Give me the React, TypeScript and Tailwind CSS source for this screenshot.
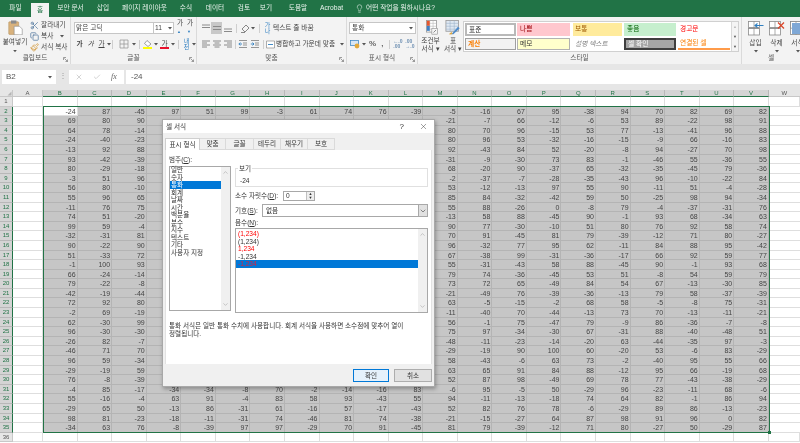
import React from "react";
import { Scissors, Copy, Paintbrush, Lightbulb, X, Check, ChevronUp, ChevronDown } from "lucide-react";

const RAW = [
  "-24 87 -45 97 51 99 -3 61 74 76 -39 -5 -16 67 95 -38 94 70 82 69 82",
  "69 80 90|-21 -7 66 -12 -6 53 89 -22 98 91",
  "64 78 -14|80 70 96 -15 53 77 -13 -41 96 88",
  "-24 -40 -23|80 96 53 -32 -16 -15 -9 66 -16 83",
  "-13 92 88|92 -43 84 52 -20 -8 94 -27 70 98",
  "93 -42 -39|-31 -9 -30 73 83 -1 -46 55 -36 55",
  "80 -29 -18|68 -20 90 -37 65 -32 -35 -45 79 -36",
  "-3 51 96|-2 -37 -7 -28 -35 -43 96 -10 -22 84",
  "56 80 -10|53 -12 -13 97 55 90 -11 51 -4 -28",
  "55 96 65|85 84 -32 -42 59 50 -25 98 94 -34",
  "-11 76 75|55 88 -26 0 -8 79 -4 -37 -31 76",
  "74 51 -20|-13 58 88 -45 90 -1 93 68 -34 63",
  "99 59 -4|90 77 -30 -10 51 80 76 92 58 74",
  "-32 -31 81|70 91 -45 81 79 -39 -12 71 80 -27",
  "90 -22 90|96 -32 77 95 62 -11 84 88 95 -42",
  "51 -33 72|67 -38 99 -31 -36 -17 66 92 59 77",
  "-1 100 93|55 -31 -43 58 88 -45 90 -1 93 68",
  "66 -24 -14|79 74 -36 -45 53 51 -8 54 59 79",
  "79 -22 -8|73 72 65 -49 84 54 67 -13 -30 85",
  "-42 -19 -44|-21 -49 76 -39 -36 -13 79 58 -37 -39",
  "72 92 80|63 -5 -15 -2 68 58 -5 -8 75 -31",
  "-2 69 -19|-11 -40 70 -44 -13 73 70 -13 -11 -21",
  "62 -30 99|56 -1 75 -47 79 -9 86 -36 -7 -8",
  "96 -30 -30|75 97 -34 -30 67 -31 88 -40 -48 51",
  "-26 82 -7|-48 -11 -23 -14 -20 63 -44 -35 97 -3",
  "-46 71 70|-29 -19 90 100 60 -20 53 -6 83 -29",
  "96 59 -34|58 -43 -6 63 73 -2 -40 95 55 66",
  "-29 -19 59|63 65 91 84 88 -12 95 66 -19 68",
  "76 -8 -39|52 87 98 -49 69 78 77 -43 -38 -29",
  "-4 85 -17 -34 -34 -8 70 -2 -14 -16 83 -6 95 -5 50 -29 96 -23 -11 68 -6",
  "55 -16 -4 63 91 -4 83 58 93 -43 55 94 -11 -13 -18 74 64 82 -1 86 94",
  "-29 65 50 -13 86 -31 61 -16 57 -17 -43 52 82 76 78 -6 -29 89 86 -13 -23",
  "98 81 -23 -18 -11 -31 74 -46 81 74 -38 -21 -15 -27 64 87 98 91 96 0 82",
  "-34 63 76 -8 -39 97 97 -29 70 91 -45 81 79 -39 -12 71 80 -27 50 -29 87",
];
const ROWS: string[][] = RAW.map((r) => {
  if (!r.includes("|")) return r.split(" ");
  const [a, b] = r.split("|");
  return [...a.split(" "), "", "", "", "", "", "", "", "", ...b.split(" ")];
});
const COLS = "BCDEFGHIJKLMNOPQRSTUV".split("");

function Launcher() {
  return (
    <svg width="5" height="5" viewBox="0 0 5 5" className="absolute right-[2px] bottom-[2px]">
      <path d="M0.5 0.5H3M0.5 0.5V3M1.5 1.5L4.5 4.5M4.5 2.5V4.5H2.5" stroke="#777" strokeWidth="0.7" fill="none" />
    </svg>
  );
}

function Caret({ className = "" }: { className?: string }) {
  return (
    <svg width="4" height="3" viewBox="0 0 4 3" className={className}>
      <path d="M0 0H4L2 2.5Z" fill="#555" />
    </svg>
  );
}

function Group({ w, label, launcher, children }: { w: string; label: string; launcher?: boolean; children: React.ReactNode }) {
  return (
    <div className={`relative flex flex-col shrink-0 ${w} border-r border-[#dadada]`}>
      <div className="h-[36px] flex">{children}</div>
      <div className="h-[11px] text-center text-[#555] text-[6.7px] leading-[9px]">{label}</div>
      {launcher && <Launcher />}
    </div>
  );
}

function Align({ kind }: { kind: "top" | "mid" | "bot" | "left" | "center" | "right" }) {
  const d: Record<string, string> = {
    top: "M1 2H9M1 4.5H9",
    mid: "M1 3.5H9M1 6.5H9",
    bot: "M1 6H9M1 8.5H9",
    left: "M1 2H9M1 4H6M1 6H9M1 8H6",
    center: "M1 2H9M2.5 4H7.5M1 6H9M2.5 8H7.5",
    right: "M1 2H9M4 4H9M1 6H9M4 8H9",
  };
  return (
    <svg width="10" height="10" viewBox="0 0 10 10">
      <path d={d[kind]} stroke="#8a8a8a" strokeWidth="1" fill="none" />
    </svg>
  );
}

function Indent({ flip }: { flip?: boolean }) {
  return (
    <svg width="10" height="10" viewBox="0 0 10 10">
      <path d="M1 1.5H9M5 4H9M5 6H9M1 8.5H9" stroke="#8a8a8a" strokeWidth="0.9" fill="none" />
      <path d={flip ? "M4 5H1M2.3 3.5L0.8 5L2.3 6.5" : "M0.8 5H3.8M2.5 3.5L4 5L2.5 6.5"} stroke="#2f7fc1" strokeWidth="0.9" fill="none" />
    </svg>
  );
}

function CondFormat() {
  return (
    <svg width="18" height="18" viewBox="0 0 18 18">
      <rect x="3.5" y="0.5" width="12" height="14" fill="#fff" stroke="#9a9a9a" />
      <path d="M3.5 4H15.5M3.5 7.5H15.5M3.5 11H15.5M7.5 0.5V14.5M11.5 0.5V14.5" stroke="#b8b8b8" strokeWidth="0.7" />
      <rect x="4" y="1" width="3.5" height="6" fill="#e4572e" />
      <rect x="4" y="7" width="3.5" height="6" fill="#3d7fc4" />
      <rect x="10" y="10" width="7" height="7" fill="#f4f4f4" stroke="#8a8a8a" strokeWidth="0.7" />
      <path d="M12 15L15 12" stroke="#555" strokeWidth="0.8" />
    </svg>
  );
}

function TableFormat() {
  return (
    <svg width="18" height="18" viewBox="0 0 18 18">
      <rect x="0.5" y="0.5" width="15" height="13" fill="#dfe8f2" stroke="#9a9a9a" />
      <path d="M0.5 4H15.5M0.5 7.5H15.5M0.5 11H15.5M5.5 0.5V14M10.5 0.5V14" stroke="#9db3ca" strokeWidth="0.7" />
      <path d="M7 17L15 8L17 10L9.5 17Z" fill="#4d8ac9" />
      <path d="M4 17L7 14.5L8.5 16L7 17.5Z" fill="#d9a441" />
    </svg>
  );
}

function InsertIcon({ kind }: { kind: "insert" | "delete" | "format" }) {
  return (
    <svg width="17" height="16" viewBox="0 0 17 16">
      <rect x="1.5" y={kind === "format" ? 1.5 : 8.5} width="11" height="6.5" fill="#fff" stroke="#8a8a8a" strokeWidth="0.8" />
      <rect x="1.5" y="1.5" width="11" height={kind === "format" ? 13 : 6} fill="#fff" stroke="#8a8a8a" strokeWidth="0.8" />
      <path d="M7 1.5V15M1.5 8.2H12.5" stroke="#8a8a8a" strokeWidth="0.7" />
      {kind === "insert" && <path d="M16.5 5.5H8M10.5 3.5L8 5.5L10.5 7.5" stroke="#2f7fc1" strokeWidth="1.1" fill="none" />}
      {kind === "delete" && <path d="M10 2.5L16 8.5M16 2.5L10 8.5" stroke="#d9472b" strokeWidth="1.3" fill="none" />}
      {kind === "format" && <rect x="3" y="3" width="8" height="11" fill="#7fa8d6" />}
    </svg>
  );
}

function Ribbon() {
  return (
    <div className="flex h-[47px] bg-[#f3f3f3] overflow-hidden">
      <Group w="w-[71px]" label="클립보드" launcher>
        <div className="w-[30px] flex flex-col items-center pt-[3px]">
          <svg width="17" height="17" viewBox="0 0 17 17">
            <rect x="1" y="2" width="11" height="14" rx="0.8" fill="#d9b27c" stroke="#b08d58" strokeWidth="0.6" />
            <rect x="3.5" y="0.5" width="6" height="3.5" fill="#8c8c8c" />
            <path d="M7 7H13L16 10V16.5H7Z" fill="#fff" stroke="#8d8d8d" strokeWidth="0.7" />
          </svg>
          <span className="text-[6.7px] leading-[9px] text-[#444] mt-[2px] whitespace-nowrap">붙여넣기</span>
          <Caret className="mt-[4px]" />
        </div>
        <div className="flex flex-col pt-[3px] gap-[1px] text-[6.7px] leading-[10px] text-[#444]">
          <div className="flex items-center gap-[2px] h-[10px]"><Scissors size={9} color="#53789f" /><span className="whitespace-nowrap">잘라내기</span></div>
          <div className="flex items-center gap-[2px] h-[10px]"><Copy size={9} color="#53789f" /><span>복사</span><Caret className="ml-[5px]" /></div>
          <div className="flex items-center gap-[2px] h-[10px]"><Paintbrush size={9} color="#d39a3c" /><span className="whitespace-nowrap">서식 복사</span></div>
        </div>
      </Group>
      <Group w="w-[126px]" label="글꼴" launcher>
        <div className="flex flex-col pl-[3px]">
          <div className="flex items-center mt-[5px] h-[12px]">
            <div className="w-[80px] h-[12px] bg-white border border-[#c6c6c6] pl-[1px] text-[6.7px] leading-[10px] text-[#444]">맑은 고딕</div>
            <div className="w-[20px] h-[12px] bg-white border border-l-0 border-[#c6c6c6] flex items-center justify-between px-[1px] text-[6.7px] text-[#444]">11<Caret /></div>
            <span className="ml-[3px] text-[6.7px] text-[#444] w-[10px]">가<sup className="text-[#2f7fc1] text-[4px]">▲</sup></span>
            <span className="text-[6.7px] text-[#444] w-[10px]">가<sup className="text-[#2f7fc1] text-[4px]">▼</sup></span>
          </div>
          <div className="flex items-center mt-[4px] h-[12px] text-[6.7px] text-[#444]">
            <span className="w-[11px] text-center font-bold">가</span>
            <span className="w-[11px] text-center italic">가</span>
            <span className="w-[11px] text-center underline">가</span>
            <span className="w-[2px]"><Caret /></span>
            <span className="w-[1px] h-[9px] bg-[#cfcfcf] ml-[3px] mr-[6px]" />
            <svg width="10" height="10" viewBox="0 0 10 10"><path d="M1 1H9V9H1ZM5 1V9M1 5H9" stroke="#9a9a9a" strokeWidth="0.8" fill="none" /></svg>
            <Caret className="ml-[3px]" />
            <span className="w-[1px] h-[9px] bg-[#cfcfcf] ml-[3px] mr-[3px]" />
            <div className="flex flex-col items-center w-[9px]">
              <svg width="9" height="7" viewBox="0 0 9 7"><path d="M4 0.5L8 4L5 6.5L1.5 3.5Z" fill="#fff" stroke="#777" strokeWidth="0.7" /></svg>
              <div className="w-[9px] h-[2px] bg-[#ffff00]" />
            </div>
            <Caret className="ml-[2px]" />
            <div className="flex flex-col items-center w-[9px] ml-[2px] leading-[7px]">
              <span>가</span>
              <div className="w-[9px] h-[2px] bg-[#e8112d]" />
            </div>
            <Caret className="ml-[2px]" />
            <span className="w-[1px] h-[9px] bg-[#cfcfcf] ml-[3px] mr-[3px]" />
            <span className="text-[6px] text-[#2f7fc1] leading-[6px] w-[9px] text-center">내<br />천</span>
            <Caret className="ml-[1px]" />
          </div>
        </div>
      </Group>
      <Group w="w-[150px]" label="맞춤" launcher>
        <div className="flex flex-col pl-[3px]">
          <div className="flex items-center mt-[5px] h-[12px]">
            <span className="w-[11px] flex justify-center"><Align kind="top" /></span>
            <span className="w-[11px] h-[12px] bg-[#c8c8c8] flex justify-center items-center"><Align kind="mid" /></span>
            <span className="w-[11px] flex justify-center"><Align kind="bot" /></span>
            <span className="w-[1px] h-[9px] bg-[#cfcfcf] ml-[3px] mr-[3px]" />
            <svg width="10" height="10" viewBox="0 0 10 10"><path d="M2 6L6 2L9 5L5 9ZM1 9.5H5" stroke="#7b7b7b" strokeWidth="0.9" fill="none" /></svg>
            <Caret className="ml-[1px]" />
            <span className="w-[1px] h-[9px] bg-[#cfcfcf] ml-[4px] mr-[3px]" />
            <span className="text-[6px] text-[#2f7fc1] leading-[6px] w-[9px] text-center">가<br />나</span>
            <span className="ml-[1px] text-[6.7px] text-[#444] whitespace-nowrap">텍스트 줄 바꿈</span>
          </div>
          <div className="flex items-center mt-[4px] h-[12px]">
            <span className="w-[11px] flex justify-center"><Align kind="left" /></span>
            <span className="w-[11px] flex justify-center"><Align kind="center" /></span>
            <span className="w-[11px] flex justify-center"><Align kind="right" /></span>
            <span className="w-[1px] h-[9px] bg-[#cfcfcf] ml-[2px] mr-[2px]" />
            <Indent flip />
            <span className="w-[2px]" />
            <Indent />
            <span className="w-[1px] h-[9px] bg-[#cfcfcf] ml-[3px] mr-[2px]" />
            <svg width="9" height="9" viewBox="0 0 9 9"><path d="M0.5 1H8.5V8H0.5Z" fill="#fff" stroke="#8d8d8d" strokeWidth="0.7" /><path d="M2 4.5H7" stroke="#2f7fc1" strokeWidth="0.9" /></svg>
            <span className="ml-[1px] text-[6.7px] text-[#444] whitespace-nowrap">병합하고 가운데 맞춤</span>
            <Caret className="ml-[5px]" />
          </div>
        </div>
      </Group>
      <Group w="w-[71px]" label="표시 형식" launcher>
        <div className="flex flex-col pl-[2px]">
          <div className="w-[67px] h-[12px] mt-[5px] bg-white border border-[#c6c6c6] flex items-center justify-between px-[2px] text-[6.7px] text-[#444]">통화<Caret /></div>
          <div className="flex items-center mt-[4px] h-[12px] text-[8px] text-[#555]">
            <svg width="11" height="10" viewBox="0 0 11 10" className="ml-[1px]"><rect x="0.5" y="1.5" width="8" height="5" fill="#d8e6f3" stroke="#2f7fc1" strokeWidth="0.7" /><circle cx="7" cy="7" r="2.4" fill="#e2a93b" /></svg>
            <Caret className="ml-[1px]" />
            <span className="ml-[3px] font-bold text-[#666]">%</span>
            <span className="ml-[5px] font-bold text-[#666]">,</span>
            <span className="w-[1px] h-[9px] bg-[#cfcfcf] ml-[6px] mr-[3px]" />
            <span className="text-[5px] leading-[5px] text-[#6d8fb2] font-bold w-[11px]">←.0<br />.00</span>
            <span className="text-[5px] leading-[5px] ml-[1px] text-[#6d8fb2] font-bold w-[11px]">.00<br />→.0</span>
          </div>
        </div>
      </Group>
      <div className="relative flex flex-col shrink-0 w-[324px] border-r border-[#dadada]">
        <div className="h-[36px] flex">
          <div className="w-[25px] flex flex-col items-center pt-[3px] text-[6.7px] leading-[8px] text-[#444]">
            <CondFormat />
            <span className="mt-[2px]">조건부</span>
            <span className="whitespace-nowrap">서식 ▾</span>
          </div>
          <div className="w-[20px] flex flex-col items-center pt-[3px] text-[6.7px] leading-[8px] text-[#444]">
            <TableFormat />
            <span className="mt-[2px]">표</span>
            <span className="whitespace-nowrap">서식 ▾</span>
          </div>
          <div className="mt-[4px] w-[276px] h-[31px] bg-white border border-[#d0d0d0] flex">
            <div className="grid grid-cols-[52px_54px_53px_54px_52px] grid-rows-2 gap-y-[2px] pl-[1px] py-[1px] w-[268px] text-[6.7px] leading-[11px]">
              <div className="mr-[1px] border-2 border-[#b9b9b9] bg-white text-[#222] leading-[9px] pl-[2px]">표준</div>
              <div className="mr-[1px] bg-[#ffc7ce] text-[#9c0006] pl-[3px]">나쁨</div>
              <div className="mx-[2px] bg-[#ffeb9c] text-[#9c5700] pl-[2px]">보통</div>
              <div className="mr-[2px] bg-[#c6efce] text-[#006100] pl-[3px]">좋음</div>
              <div className="text-[#ff0000] pl-[2px]">경고문</div>
              <div className="mr-[1px] border border-[#a0a0a0] bg-[#f2f2f2] text-[#fa7d00] font-bold leading-[9px] pl-[2px]">계산</div>
              <div className="mr-[1px] border border-[#b2b2b2] bg-[#ffffcc] text-[#333] leading-[9px] pl-[2px]">메모</div>
              <div className="mx-[2px] italic text-[#7f7f7f] pl-[2px] whitespace-nowrap">설명 텍스트</div>
              <div className="mr-[2px] border-2 border-[#3f3f3f] bg-[#a5a5a5] text-white leading-[8px] pl-[2px] whitespace-nowrap">셀 확인</div>
              <div className="border-b-2 border-[#ff9b4a] text-[#fa7d00] pl-[2px] leading-[9px] whitespace-nowrap">연결된 셀</div>
            </div>
            <div className="ml-auto w-[7px] flex flex-col border-l border-[#d8d8d8] bg-[#f4f4f4]">
              <span className="h-[10px] flex items-center justify-center text-[4px] text-[#bbb]">▲</span>
              <span className="h-[10px] flex items-center justify-center text-[4px] text-[#555]">▼</span>
              <span className="h-[9px] flex items-center justify-center text-[4px] text-[#555]">▼</span>
            </div>
          </div>
        </div>
        <div className="h-[11px] text-center text-[#555] text-[6.7px] leading-[9px]">스타일</div>
      </div>
      <div className="flex flex-col shrink-0 w-[58px]">
        <div className="h-[36px] flex pl-[3px] text-[6.7px] leading-[8px] text-[#444]">
          {([["insert", "삽입"], ["delete", "삭제"], ["format", "서식"]] as const).map(([k, t]) => (
            <div key={k} className="w-[21px] shrink-0 flex flex-col items-center pt-[3px]">
              <InsertIcon kind={k} />
              <span className="mt-[3px] whitespace-nowrap">{t}</span>
              <Caret className="mt-[3px]" />
            </div>
          ))}
        </div>
        <div className="h-[11px] text-center text-[#555] text-[6.7px] leading-[9px]">셀</div>
      </div>
    </div>
  );
}

function Tabs() {
  const tabs: [string, string][] = [
    ["파일", "w-[31px]"], ["홈", "w-[18px]"], ["보안 문서", "w-[43px]"], ["삽입", "w-[22px]"],
    ["페이지 레이아웃", "w-[61px]"], ["수식", "w-[22px]"], ["데이터", "w-[36px]"], ["검토", "w-[22px]"],
    ["보기", "w-[22px]"], ["도움말", "w-[42px]"], ["Acrobat", "w-[25px]"],
  ];
  return (
    <div className="flex h-[17px] bg-[#217346] text-[#e9f3ed] text-[6.7px] items-end">
      {tabs.map(([t, w]) => (
        <div
          key={t}
          className={`${w} shrink-0 whitespace-nowrap flex justify-center items-center ${t === "홈" ? "h-[14px] bg-[#f3f3f3] text-[#217346]" : "h-[17px]"}`}
        >
          {t}
        </div>
      ))}
      <div className="flex items-center h-[17px] ml-[11px] whitespace-nowrap">
        <Lightbulb size={9} color="#e9f3ed" strokeWidth={1.5} />
        <span className="ml-[2px]">어떤 작업을 원하시나요?</span>
      </div>
    </div>
  );
}

function FormulaBar() {
  return (
    <div className="bg-[#e6e6e6] pt-[6px] pb-[6px] h-[26px] flex">
      <div className="w-[54px] h-[14px] ml-[2px] bg-white flex items-center justify-between px-[4px] text-[8px] text-[#555]">B2<Caret /></div>
      <div className="w-[13px] text-center text-[#9a9a9a] text-[8px] leading-[12px]">⋮</div>
      <div className="w-[55px] h-[14px] bg-white flex items-center pl-[6px] gap-[10px] text-[#a8a8a8]">
        <X size={8} strokeWidth={1.5} />
        <Check size={8} strokeWidth={1.5} />
        <span className="text-[8px] italic text-[#666] font-['Liberation_Serif',serif]">fx</span>
      </div>
      <div className="flex-1 h-[14px] ml-[2px] bg-white pl-[5px] text-[8px] leading-[14px] text-[#555]">-24</div>
    </div>
  );
}

function Sheet() {
  return (
    <div className="relative h-[353px] overflow-hidden bg-white">
      <div className="grid grid-cols-[13px_30px_repeat(21,34.57px)_31px] grid-rows-[7px] auto-rows-[9.6px] text-[7px] leading-[9px]">
        <div className="bg-[#e6e6e6] border-r border-b border-[#c8c8c8] flex items-end justify-end">
          <svg width="5" height="5" viewBox="0 0 5 5"><path d="M4.5 0.5V4.5H0.5Z" fill="#b4b4b4" /></svg>
        </div>
        <div className="bg-[#e6e6e6] border-r border-b border-[#c8c8c8] text-center text-[#555] leading-[6px] text-[6px]">A</div>
        {COLS.map((c) => (
          <div key={c} className="bg-[#d4d4d4] border-r border-[#b8b8b8] border-b border-b-[#217346] text-center text-[#217346] leading-[6px] text-[6px]">{c}</div>
        ))}
        <div className="bg-[#e6e6e6] border-b border-[#c8c8c8] text-center text-[#555] leading-[6px] text-[6px]">W</div>

        <div className="bg-[#e6e6e6] border-r border-b border-[#c8c8c8] text-center text-[#555] text-[6px]">1</div>
        {Array.from({ length: 23 }, (_, i) => (
          <div key={i} className="border-r border-b border-[#dedede]" />
        ))}

        {ROWS.map((row, r) => (
          <React.Fragment key={r}>
            <div className="bg-[#d4d4d4] border-b border-[#b8b8b8] border-r border-r-[#217346] text-center text-[#217346] text-[6px]">{r + 2}</div>
            <div className="border-r border-b border-[#dedede]" />
            {row.map((v, c) => (
              <div
                key={c}
                className={`border-r border-b text-right pr-[1px] text-[#444] text-[7px] ${r === 0 && c === 0 ? "bg-white border-[#dedede]" : "bg-[#c6c6c6] border-[#b4b4b4]"}`}
              >
                {v}
              </div>
            ))}
            <div className="border-b border-[#dedede]" />
          </React.Fragment>
        ))}

        <div className="bg-[#e6e6e6] border-r border-b border-[#c8c8c8] text-center text-[#555] text-[6px]">36</div>
        {Array.from({ length: 23 }, (_, i) => (
          <div key={i} className="border-r border-b border-[#dedede]" />
        ))}
      </div>
      <div className="absolute left-[43px] top-[16px] w-[727px] h-[327px] border border-[#217346]" />
      <div className="absolute left-[768px] top-[341px] w-[3px] h-[3px] bg-[#217346]" />
    </div>
  );
}

function ListScroll() {
  return (
    <div className="absolute right-0 top-0 bottom-0 w-[9px] bg-[#f0f0f0] flex flex-col justify-between items-center py-[2px]">
      <ChevronUp size={7} color="#a6a6a6" />
      <ChevronDown size={7} color="#a6a6a6" />
    </div>
  );
}

function Dialog() {
  const cats = ["일반", "숫자", "통화", "회계", "날짜", "시간", "백분율", "분수", "지수", "텍스트", "기타", "사용자 지정"];
  const tabs = [["맞춤", "w-[26px]"], ["글꼴", "w-[28px]"], ["테두리", "w-[27px]"], ["채우기", "w-[27px]"], ["보호", "w-[27px]"]];
  return (
    <div className="absolute left-[162px] top-[119px] w-[273px] h-[268px] bg-[#f0f0f0] border border-[#a8a8a8] shadow-[1px_2px_4px_rgba(0,0,0,0.3)] flex flex-col text-[6.6px] text-[#333]">
      <div className="h-[13px] bg-white flex items-center pl-[3px] shrink-0">
        <span className="whitespace-nowrap">셀 서식</span>
        <span className="ml-auto text-[8px] mr-[15px]">?</span>
        <X size={9} className="mr-[6px]" strokeWidth={1.2} />
      </div>
      <div className="h-[5px] shrink-0" />
      <div className="flex h-[12px] pl-[2px] shrink-0 relative z-10">
        <div className="w-[35px] bg-white border border-b-0 border-[#cfcfcf] text-center leading-[11px] whitespace-nowrap">표시 형식</div>
        {tabs.map(([t, w]) => (
          <div key={t} className={`${w} border-t border-r border-b border-[#dadada] text-center leading-[10px]`}>{t}</div>
        ))}
      </div>
      <div className="mx-[2px] h-[214px] bg-white border-x border-[#e2e2e2] shrink-0 px-[3px]">
        <div className="flex">
          <div className="w-[62px] shrink-0 pt-[5px]">
            <div className="h-[11px] leading-[9px]">범주(<u>C</u>):</div>
            <div className="relative h-[145px] border border-[#a8a8a8] bg-white">
              <div className="-mt-[1px]">
                {cats.map((c, i) => (
                  <div key={c} className={`h-[7.5px] leading-[7.5px] pl-[1px] w-[51px] whitespace-nowrap ${i === 2 ? "bg-[#0078d7] text-white" : ""}`}>{c}</div>
                ))}
              </div>
              <ListScroll />
            </div>
          </div>
          <div className="ml-[4px] w-[193px] pt-[18px]">
            <div className="relative h-[19px] border border-[#e0e0e0] pl-[4px] pt-[8px] leading-[8px]">
              <span className="absolute left-[2px] -top-[4px] bg-white px-[1px] leading-[8px]">보기</span>
              -24
            </div>
            <div className="flex items-center mt-[4px] h-[10px]">
              <span className="w-[48px] whitespace-nowrap">소수 자릿수(<u>D</u>):</span>
              <div className="relative w-[32px] h-[10px] border border-[#a8a8a8] pl-[2px] leading-[8px]">
                0
                <div className="absolute right-0 top-0 bottom-0 w-[8px] bg-[#eeeeee] border-l border-[#c0c0c0] text-[4px] leading-[4px] text-center">▲<br />▼</div>
              </div>
            </div>
            <div className="flex items-center mt-[3px] h-[13px]">
              <span className="w-[27px] whitespace-nowrap">기호(<u>S</u>):</span>
              <div className="relative flex-1 h-[13px] border border-[#a8a8a8] pl-[3px] leading-[11px]">
                없음
                <div className="absolute right-0 top-0 bottom-0 w-[9px] bg-[#e1e1e1] border-l border-[#a8a8a8] flex items-center justify-center">
                  <ChevronDown size={8} color="#555" />
                </div>
              </div>
            </div>
            <div className="h-[11px] leading-[12px]">음수(<u>N</u>):</div>
            <div className="relative h-[85px] border border-[#a8a8a8] pt-[1px] leading-[7.5px]">
              <div className="h-[7.5px] pl-[2px] text-[#ff0000]">(1,234)</div>
              <div className="h-[7.5px] pl-[2px]">(1,234)</div>
              <div className="h-[7.5px] pl-[2px] text-[#ff0000]">1,234</div>
              <div className="h-[7.5px] pl-[2px]">-1,234</div>
              <div className="h-[7.5px] pl-[2px] w-[182px] bg-[#0078d7] text-[#e0203a]">-1,234</div>
              <ListScroll />
            </div>
          </div>
        </div>
        <p className="mt-[9px] leading-[7.5px] whitespace-nowrap">
          통화 서식은 일반 통화 수치에 사용합니다. 회계 서식을 사용하면 소수점에 맞추어 열이<br />정렬됩니다.
        </p>
      </div>
      <div className="flex-1 flex justify-end items-start pt-[5px] pr-[2px] gap-[5px]">
        <div className="w-[36px] h-[13px] bg-[#e5f1fb] border border-[#0078d7] text-center leading-[11px]">확인</div>
        <div className="w-[38px] h-[13px] bg-[#e1e1e1] border border-[#adadad] text-center leading-[11px]">취소</div>
      </div>
    </div>
  );
}

export default function App() {
  return (
    <div className="relative w-[800px] h-[443px] overflow-hidden bg-white blur-[0.35px] font-['Liberation_Sans','Noto_Sans_CJK_KR',sans-serif]">
      <Tabs />
      <Ribbon />
      <FormulaBar />
      <Sheet />
      <Dialog />
    </div>
  );
}
